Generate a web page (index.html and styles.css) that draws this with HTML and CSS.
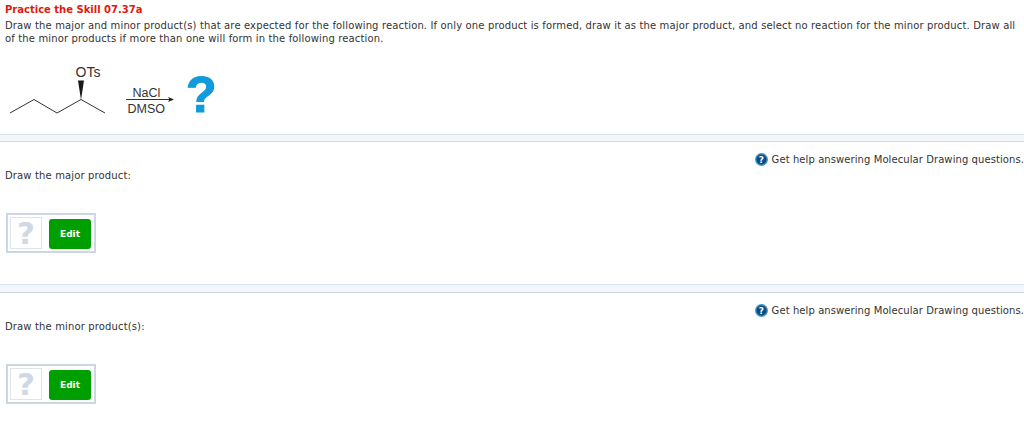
FILE: index.html
```html
<!DOCTYPE html>
<html lang="en">
<head>
<meta charset="utf-8">
<title>Practice the Skill 07.37a</title>
<link rel="stylesheet" href="styles.css">
</head>
<body>
<header class="intro">
  <h1 class="title">Practice the Skill 07.37a</h1>
  <p class="prompt">Draw the major and minor product(s) that are expected for the following reaction. If only one product is formed, draw it as the major product, and select no reaction for the minor product. Draw all of the minor products if more than one will form in the following reaction.</p>
  <svg class="reaction" width="230" height="72" viewBox="0 0 230 72" aria-label="Reaction scheme">
    <polyline class="bond" points="10,63 34,49.5 57,63 81,49.5 105,63"/>
    <polygon class="wedge" points="81,50 78,30.5 84,30.5"/>
    <text class="chem" x="75.5" y="27">OTs</text>
    <text class="chem chem-small" x="132.5" y="46.5">NaCl</text>
    <line class="bond" x1="126" y1="49.5" x2="171" y2="49.5"/>
    <polygon class="wedge" points="174,49.5 168,47 169.5,49.5 168,52"/>
    <text class="chem chem-small" x="127.5" y="62.5">DMSO</text>
    <text class="unknown" x="186" y="61.5">?</text>
  </svg>
</header>

<section class="part part-major">
  <div class="divider"></div>
  <a class="help">
    <svg class="help-icon" width="13" height="13" viewBox="0 0 13 13"><circle cx="6.5" cy="6.5" r="6.5" fill="#3f93c8"/><circle cx="6.5" cy="6.5" r="5" fill="#0b4a7c"/><text x="6.5" y="9.8" text-anchor="middle" class="help-mark">?</text></svg>
    Get help answering Molecular Drawing questions.
  </a>
  <p class="label">Draw the major product:</p>
  <div class="answer">
    <div class="preview">?</div>
    <button class="edit">Edit</button>
  </div>
</section>

<section class="part part-minor">
  <div class="divider"></div>
  <a class="help">
    <svg class="help-icon" width="13" height="13" viewBox="0 0 13 13"><circle cx="6.5" cy="6.5" r="6.5" fill="#3f93c8"/><circle cx="6.5" cy="6.5" r="5" fill="#0b4a7c"/><text x="6.5" y="9.8" text-anchor="middle" class="help-mark">?</text></svg>
    Get help answering Molecular Drawing questions.
  </a>
  <p class="label">Draw the minor product(s):</p>
  <div class="answer">
    <div class="preview">?</div>
    <button class="edit">Edit</button>
  </div>
</section>
</body>
</html>
```
FILE: styles.css
```css
html, body {
  margin: 0;
  padding: 0;
  background: #fff;
}
body {
  width: 1024px;
  height: 435px;
  overflow: hidden;
  font-family: "DejaVu Sans", Verdana, sans-serif;
  font-size: 10px;
  line-height: 13px;
  letter-spacing: 0.14px;
  color: #333;
}
.intro {
  padding: 3px 5px 0;
  height: 131px;
  box-sizing: border-box;
}
.title {
  margin: 0;
  font-size: 10px;
  line-height: 13px;
  font-weight: bold;
  letter-spacing: 0;
  color: #e01a0c;
}
.prompt {
  margin: 3px 0 0;
  width: 1014px;
}
.reaction {
  display: block;
  margin: 5px 0 0 -5px;
  letter-spacing: 0;
}
.bond {
  fill: none;
  stroke: #333;
  stroke-width: 1;
}
.wedge {
  fill: #1a1a1a;
}
.chem {
  font-family: "Liberation Sans", Arial, sans-serif;
  font-size: 14px;
  fill: #333;
}
.chem-small {
  font-size: 12.5px;
}
.unknown {
  font-family: "Liberation Sans", Arial, sans-serif;
  font-size: 50px;
  font-weight: bold;
  fill: #0f9bdc;
  stroke: #0f9bdc;
  stroke-width: 1.2px;
}
.part {
  display: flex;
  flex-direction: column;
}
.part-major {
  height: 150px;
}
.part-minor .divider {
  height: 7px;
}
.divider {
  height: 6px;
  margin-top: 3px;
  background: #f3f6fa;
  border-top: 1px solid #dbe4ee;
  border-bottom: 1px solid #cfdae6;
}
.help {
  display: flex;
  align-items: center;
  justify-content: flex-end;
  gap: 4px;
  margin-top: 11px;
  height: 13px;
  letter-spacing: 0.08px;
}
.help-icon {
  flex: none;
}
.help-mark {
  font-size: 9px;
  font-weight: bold;
  fill: #fff;
  font-family: "DejaVu Sans", sans-serif;
}
.label {
  margin: 3px 0 0 5px;
}
.answer {
  display: flex;
  align-items: flex-end;
  gap: 7px;
  width: 90px;
  height: 40px;
  box-sizing: border-box;
  margin: 31px 0 0 6px;
  padding: 0 3px 2px 2px;
  border: 2px solid #ccd7e3;
}
.preview {
  width: 32px;
  height: 32px;
  box-sizing: border-box;
  border: 1px solid #dde4ec;
  text-align: center;
  font-family: "DejaVu Sans", Arial, sans-serif;
  font-weight: bold;
  font-size: 31px;
  line-height: 30px;
  letter-spacing: 0;
  color: #cfd9e5;
}
.edit {
  width: 42px;
  height: 30px;
  padding: 0;
  border: 0;
  border-radius: 3px;
  background: #009f00;
  color: #fff;
  font-family: "DejaVu Sans", Verdana, sans-serif;
  font-size: 9px;
  font-weight: bold;
}
```
